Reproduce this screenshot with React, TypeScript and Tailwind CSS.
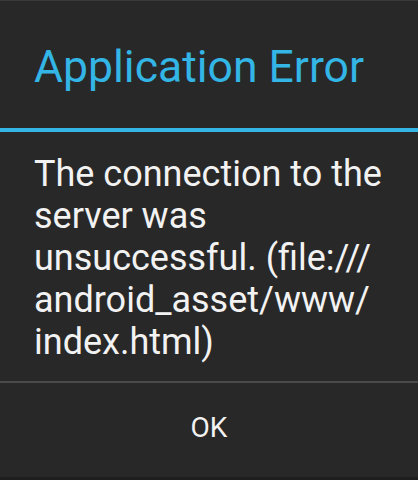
export default function App() {
  return (
    <div
      className="w-[418px] h-[480px] bg-[#282828] flex flex-col border-t border-[#3a3a3a]"
      style={{ fontFamily: "Roboto, 'Noto Sans', sans-serif" }}
    >
      <div className="h-[127px] pl-[34px] pt-[44px]">
        <div className="text-[44.5px] leading-[44px] text-[#33b5e5]">Application Error</div>
      </div>
      <div className="h-[4px] bg-[#33b5e5]" />
      <div className="pl-[34px] pr-[4px] pt-[21px] pb-[18px] h-[249px]">
        <div className="text-[36px] leading-[42px] text-[#f2f2f2] whitespace-nowrap">
          The connection to the
          <br />
          server was
          <br />
          unsuccessful. (file:///
          <br />
          android_asset/www/
          <br />
          index.html)
        </div>
      </div>
      <div className="h-[2px] bg-[#4a4a4a]" />
      <div className="flex-1 flex items-center justify-center pb-[4px]">
        <span className="text-[28px] text-[#f2f2f2]">OK</span>
      </div>
      <div className="h-[3px] bg-[#1e1e1e]" />
    </div>
  );
}
